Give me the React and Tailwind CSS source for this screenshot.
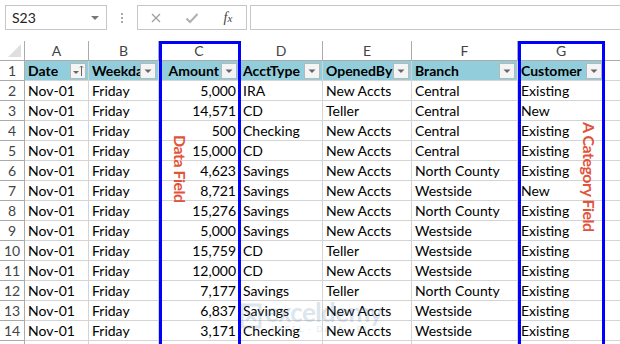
import React from 'react';

const cols = ['A', 'B', 'C', 'D', 'E', 'F', 'G'];
const gridCols = 'grid grid-cols-[25px_64px_70px_81px_83px_89px_106px_87px_1fr]';

const rows = [
  ['5,000', 'IRA', 'New Accts', 'Central', 'Existing'],
  ['14,571', 'CD', 'Teller', 'Central', 'New'],
  ['500', 'Checking', 'New Accts', 'Central', 'Existing'],
  ['15,000', 'CD', 'New Accts', 'Central', 'Existing'],
  ['4,623', 'Savings', 'New Accts', 'North County', 'Existing'],
  ['8,721', 'Savings', 'New Accts', 'Westside', 'New'],
  ['15,276', 'Savings', 'New Accts', 'North County', 'Existing'],
  ['5,000', 'Savings', 'New Accts', 'Westside', 'Existing'],
  ['15,759', 'CD', 'Teller', 'Westside', 'Existing'],
  ['12,000', 'CD', 'New Accts', 'Westside', 'Existing'],
  ['7,177', 'Savings', 'Teller', 'North County', 'Existing'],
  ['6,837', 'Savings', 'New Accts', 'Westside', 'Existing'],
  ['3,171', 'Checking', 'New Accts', 'Westside', 'Existing'],
];

function FilterButton({ sort }) {
  return (
    <div className="absolute right-[2px] top-[2px] w-[16px] h-[16px] bg-[#f4f4f4] border border-[#b8b8b8] flex items-center justify-center">
      {sort ? (
        <svg width="12" height="12" viewBox="0 0 12 12">
          <path d="M1 6 L7 6 L4 9 Z" fill="#666" />
          <path d="M9.5 1 L9.5 11 M8 2.5 L9.5 1 L11 2.5" stroke="#666" strokeWidth="1" fill="none" />
        </svg>
      ) : (
        <svg width="10" height="10" viewBox="0 0 10 10">
          <path d="M1.5 3.5 L8.5 3.5 L5 7 Z" fill="#666" />
        </svg>
      )}
    </div>
  );
}

function HeadCell({ label, align = 'left', sort }) {
  return (
    <div className="relative h-[20px] bg-[#92cddc] border-r border-b border-[#d4d4d4] overflow-hidden">
      <div className={`h-full flex items-center font-bold text-[14px] text-black whitespace-nowrap ${align === 'right' ? 'justify-end pr-[20px]' : 'pl-[3px]'}`}>
        {label}
      </div>
      <FilterButton sort={sort} />
    </div>
  );
}

function Cell({ children, right }) {
  return (
    <div className={`h-[20px] border-r border-b border-[#d4d4d4] flex items-center text-[14px] text-black whitespace-nowrap overflow-hidden ${right ? 'justify-end pr-[3px]' : 'pl-[3px]'}`}>
      {children}
    </div>
  );
}

export default function App() {
  return (
    <div className="w-[620px] h-[344px] overflow-hidden bg-white font-['Lato',sans-serif] relative">
      {/* formula bar */}
      <div className="h-[41px] flex items-start pt-[5px] pl-[5px]">
        <div className="w-[102px] h-[25px] border border-[#c6c6c6] flex items-center justify-between px-[6px] text-[14px] text-[#222]">
          <span>S23</span>
          <svg width="10" height="8" viewBox="0 0 10 8"><path d="M1 2 L9 2 L5 6 Z" fill="#777" /></svg>
        </div>
        <div className="w-[30px] h-[25px] flex items-center justify-center">
          <svg width="4" height="12" viewBox="0 0 4 12">
            <rect x="1" y="1" width="2" height="2" fill="#aaa" />
            <rect x="1" y="5" width="2" height="2" fill="#aaa" />
            <rect x="1" y="9" width="2" height="2" fill="#aaa" />
          </svg>
        </div>
        <div className="w-[110px] h-[25px] border border-[#c6c6c6] flex items-center">
          <div className="w-[36px] flex justify-center">
            <svg width="12" height="12" viewBox="0 0 12 12"><path d="M2 2 L10 10 M10 2 L2 10" stroke="#a0a0a0" strokeWidth="1.3" /></svg>
          </div>
          <div className="w-[36px] flex justify-center">
            <svg width="14" height="12" viewBox="0 0 14 12"><path d="M1.5 6.5 L5 10 L12.5 2" stroke="#b0b0b0" strokeWidth="2" fill="none" /></svg>
          </div>
          <div className="w-[36px] flex justify-center font-['Liberation_Serif',serif] italic text-[14px] text-[#444]">
            f<span className="text-[11px] mt-[3px]">x</span>
          </div>
        </div>
        <div className="ml-[3px] flex-1 h-[25px] border-t border-b border-l border-[#c6c6c6]" />
      </div>

      {/* sheet */}
      <div className="relative">
        <div className={`${gridCols} h-[20px]`}>
          <div className="relative border-r border-b border-[#ababab]">
            <svg className="absolute right-[3px] bottom-[3px]" width="13" height="13" viewBox="0 0 13 13"><path d="M13 0 L13 13 L0 13 Z" fill="#dfdfdf" /></svg>
          </div>
          {cols.map(c => (
            <div key={c} className="h-[20px] border-r border-b border-[#ababab] flex items-center justify-center text-[14px] text-[#444]">{c}</div>
          ))}
          <div className="border-b border-[#ababab]" />
        </div>

        <div className={gridCols}>
          <div className="h-[20px] border-r border-b border-[#ababab] flex items-center justify-center text-[14px] text-[#444]">1</div>
          <HeadCell label="Date" sort />
          <HeadCell label="Weekday" />
          <HeadCell label="Amount" align="right" />
          <HeadCell label="AcctType" />
          <HeadCell label="OpenedBy" />
          <HeadCell label="Branch" />
          <HeadCell label="Customer" />
          <div className="border-b border-[#d4d4d4]" />
        </div>

        {rows.map((r, i) => (
          <div key={i} className={gridCols}>
            <div className="h-[20px] border-r border-b border-[#ababab] flex items-center justify-center text-[14px] text-[#444]">{i + 2}</div>
            <Cell>Nov-01</Cell>
            <Cell>Friday</Cell>
            <Cell right>{r[0]}</Cell>
            <Cell>{r[1]}</Cell>
            <Cell>{r[2]}</Cell>
            <Cell>{r[3]}</Cell>
            <Cell>{r[4]}</Cell>
            <div className="border-b border-[#d4d4d4]" />
          </div>
        ))}
        <div className={gridCols}>
          <div className="h-[20px] border-r border-[#ababab]" />
          {cols.map(c => <div key={c} className="h-[20px] border-r border-[#d4d4d4]" />)}
        </div>

        {/* watermark */}
        <div className="absolute left-[240px] top-[258px] flex items-center gap-[3px] opacity-20 pointer-events-none">
          <svg width="22" height="30" viewBox="0 0 22 30">
            <path d="M2 4 L20 4 L20 26 L2 26 Z" fill="none" stroke="#5a7fa8" strokeWidth="3" />
            <path d="M6 10 L16 20 M16 10 L6 20" stroke="#5a7fa8" strokeWidth="3" />
          </svg>
          <div className="flex flex-col leading-none">
            <span className="font-bold text-[26px] text-[#5a7fa8] tracking-tight">exceldemy</span>
            <span className="text-[8px] text-[#5a7fa8] tracking-[2px] ml-[6px]">EXCEL · DATA · BI</span>
          </div>
        </div>

        {/* annotations */}
        <div className="absolute left-[159px] top-0 w-[82px] h-[320px] border-t-[3px] border-l-[3px] border-r-[3px] border-[#0000ff]" />
        <div className="absolute left-[518px] top-0 w-[87px] h-[320px] border-t-[3px] border-l-[3px] border-r-[3px] border-[#0000ff]" />
        <div className="absolute left-[172px] top-[94px] [writing-mode:vertical-rl] font-bold text-[16px] text-[#e2533b] leading-none tracking-[-0.5px]">Data Field</div>
        <div className="absolute left-[581px] top-[81px] [writing-mode:vertical-rl] font-bold text-[16px] text-[#e2533b] leading-none tracking-[-0.5px]">A Category Field</div>
      </div>
    </div>
  );
}
